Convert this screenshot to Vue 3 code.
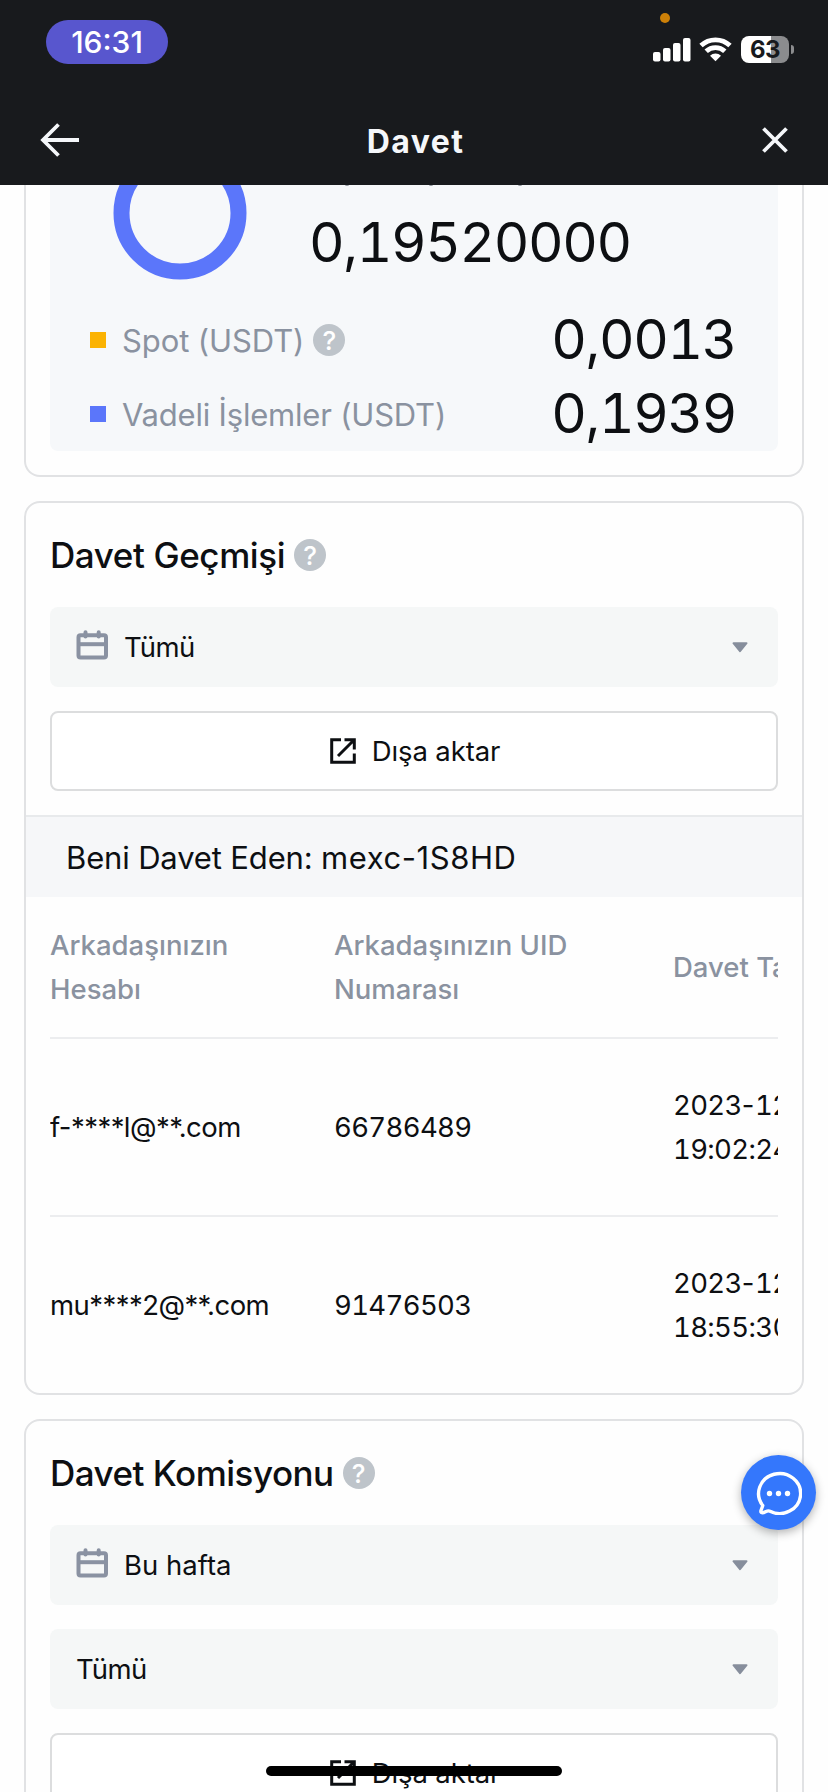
<template>
  <div class="screen">
    <header class="top">
      <div class="status-bar">
        <span class="clock">16:31</span>
        <span class="mic-dot"></span>
        <div class="status-icons">
          <svg class="signal" width="38" height="24" viewBox="0 0 38 24">
            <rect x="0" y="14" width="7.5" height="9.5" rx="2" />
            <rect x="10" y="10" width="7.5" height="13.5" rx="2" />
            <rect x="20" y="5" width="7.5" height="18.5" rx="2" />
            <rect x="30" y="0" width="7.5" height="23.5" rx="2" />
          </svg>
          <svg class="wifi" width="33" height="25" viewBox="0 0 33 25">
            <path d="M2 8.6A21 21 0 0 1 31 8.6" />
            <path d="M7.2 14.3A13.4 13.4 0 0 1 25.8 14.3" />
            <path class="wifi-base" d="M16.500 24.200L11 18.700A8.200 8.200 0 0 1 22 18.700Z" />
          </svg>
          <div class="battery">
            <span class="battery-body">63</span>
            <span class="battery-tip"></span>
          </div>
        </div>
      </div>
      <nav class="nav-bar">
        <svg class="back" width="40" height="34" viewBox="0 0 40 34">
          <path d="M39 17H3M18.500 1.500L3 17L18.500 32.500" />
        </svg>
        <h1 class="nav-title">Davet</h1>
        <svg class="close" width="26" height="26" viewBox="0 0 26 26">
          <path d="M1.500 1.500L24.500 24.500M24.500 1.500L1.500 24.500" />
        </svg>
      </nav>
    </header>

    <main class="content">
      <!-- Earnings summary -->
      <section class="card card-cut">
        <div class="panel">
          <div class="total">
            <svg class="donut" width="134" height="96" viewBox="0 0 134 96">
              <circle cx="67" cy="28" r="58.500" />
            </svg>
            <div class="total-text">
              <svg class="tails" width="190" height="3" viewBox="0 0 190 3">
                <ellipse v-for="x in [3, 87, 176]" :key="x" :cx="x" cy="0" rx="2" ry="0.900" />
              </svg>
              <span class="total-value">0,19520000</span>
            </div>
          </div>
          <div v-for="item in earnings" :key="item.label" class="earning">
            <span class="swatch" :class="item.type"></span>
            <span class="earning-label" :class="item.type">{{ item.label }}</span>
            <span v-if="item.help" class="help">?</span>
            <span class="earning-value">{{ item.value }}</span>
          </div>
        </div>
      </section>

      <!-- Invite history -->
      <section class="card">
        <h2 class="card-title">Davet Geçmişi<span class="help">?</span></h2>
        <div class="controls">
          <div class="select">
            <svg class="calendar" width="32" height="30" viewBox="0 0 32 30">
              <rect x="2.500" y="5.300" width="27.500" height="22.200" rx="2" />
              <path d="M2 14.200H30" />
              <path class="pins" d="M9.500 2.300V6.500M22.700 2.300V6.500" />
            </svg>
            <span class="select-text all">Tümü</span>
            <svg class="caret" width="16" height="11" viewBox="0 0 16 11">
              <path d="M1.500 1.200H14.500L8 9.200Z" />
            </svg>
          </div>
          <button class="export">
            <svg width="26" height="26" viewBox="0 0 26 26">
              <path d="M11 1.700H1.700V24.300H24.300V15.500M14.500 1.700H24.300V11.500M24 2L8 18" />
            </svg>
            <span>Dışa aktar</span>
          </button>
        </div>
        <div class="inviter">Beni Davet Eden: <span class="code">mexc-1S8HD</span></div>
        <div class="table">
          <div class="row head">
            <div class="cell"><span>Arkadaşınızın</span><span>Hesabı</span></div>
            <div class="cell"><span>Arkadaşınızın UID</span><span>Numarası</span></div>
            <div class="cell"><span>Davet Tarihi</span></div>
          </div>
          <div v-for="row in invites" :key="row.uid" class="row">
            <div class="cell account">{{ row.account }}</div>
            <div class="cell numeric">{{ row.uid }}</div>
            <div class="cell numeric">
              <span>{{ row.year }}<i class="dash">-</i>{{ row.month }}</span>
              <span>{{ row.time }}</span>
            </div>
          </div>
        </div>
      </section>

      <!-- Invite commission -->
      <section class="card">
        <h2 class="card-title commission">Davet Komisyonu<span class="help">?</span></h2>
        <div class="controls">
          <div class="select">
            <svg class="calendar" width="32" height="30" viewBox="0 0 32 30">
              <rect x="2.500" y="5.300" width="27.500" height="22.200" rx="2" />
              <path d="M2 14.200H30" />
              <path class="pins" d="M9.500 2.300V6.500M22.700 2.300V6.500" />
            </svg>
            <span class="select-text">Bu hafta</span>
            <svg class="caret" width="16" height="11" viewBox="0 0 16 11">
              <path d="M1.500 1.200H14.500L8 9.200Z" />
            </svg>
          </div>
          <div class="select">
            <span class="select-text all">Tümü</span>
            <svg class="caret" width="16" height="11" viewBox="0 0 16 11">
              <path d="M1.500 1.200H14.500L8 9.200Z" />
            </svg>
          </div>
          <button class="export">
            <svg width="26" height="26" viewBox="0 0 26 26">
              <path d="M11 1.700H1.700V24.300H24.300V15.500M14.500 1.700H24.300V11.500M24 2L8 18" />
            </svg>
            <span>Dışa aktar</span>
          </button>
        </div>
      </section>
    </main>

    <button class="chat">
      <svg width="46" height="44" viewBox="0 0 46 44">
        <path d="M6.800 34.500A21 20 0 1 1 14 40.300C12.500 39.200 11.500 39.700 9.500 40.800C6.500 42.500 4.300 42 5 39.500Z" />
        <circle cx="13.500" cy="22.500" r="2.700" />
        <circle cx="22.500" cy="22.500" r="2.700" />
        <circle cx="31.500" cy="22.500" r="2.700" />
      </svg>
    </button>
    <div class="home-indicator"></div>
  </div>
</template>

<script setup>
const earnings = [
  { type: 'spot', label: 'Spot (USDT)', value: '0,0013', help: true },
  { type: 'futures', label: 'Vadeli İşlemler (USDT)', value: '0,1939', help: false }
]

const invites = [
  { account: 'f-****l@**.com', uid: '66786489', year: '2023', month: '12', time: '19:02:24' },
  { account: 'mu****2@**.com', uid: '91476503', year: '2023', month: '12', time: '18:55:30' }
]
</script>

<style>
body {
  margin: 0;
  background: #fff;
}
</style>

<style scoped>
.screen {
  position: relative;
  width: 828px;
  height: 1792px;
  overflow: hidden;
  background: #fefefe;
  color: #0d0f12;
  font-family: Inter, "Liberation Sans", sans-serif;
}

.screen * {
  box-sizing: border-box;
}

.screen svg {
  display: block;
  flex: none;
}

button {
  padding: 0;
  border: none;
  color: inherit;
  font-family: inherit;
}

/* Header */
.top {
  height: 185px;
  background: #181a1d;
}

.status-bar {
  position: relative;
  display: flex;
  justify-content: space-between;
  align-items: flex-start;
  height: 96px;
  padding: 20px 34px 0 46px;
}

.clock {
  width: 122px;
  height: 44px;
  border-radius: 22px;
  background: #5856ce;
  color: #fff;
  font-size: 30px;
  font-weight: 500;
  line-height: 45px;
  text-align: center;
}

.mic-dot {
  position: absolute;
  top: 13px;
  left: 660px;
  width: 10px;
  height: 10px;
  border-radius: 50%;
  background: #cc8008;
}

.status-icons {
  display: flex;
  align-items: center;
  margin-top: 16px;
}

.signal {
  margin-right: 8px;
  fill: #fff;
}

.wifi {
  margin-right: 9px;
  fill: none;
  stroke: #fff;
  stroke-width: 4.8;
}

.wifi .wifi-base {
  fill: #fff;
  stroke: none;
}

.battery {
  display: flex;
  align-items: center;
  gap: 2px;
}

.battery-body {
  width: 48px;
  height: 27px;
  border-radius: 8px;
  background: linear-gradient(90deg, #fff 63%, #8b8c8e 63%);
  color: #181a1d;
  font-size: 24px;
  font-weight: 700;
  line-height: 27px;
  letter-spacing: -0.5px;
  text-align: center;
}

.battery-tip {
  width: 3px;
  height: 9px;
  border-radius: 0 4px 4px 0;
  background: #8b8c8e;
}

.nav-bar {
  display: flex;
  justify-content: space-between;
  align-items: center;
  height: 89px;
  padding: 0 40px;
}

.nav-bar svg {
  margin-top: -1px;
  fill: none;
  stroke: #f5f7fa;
  stroke-width: 3.8;
}

.nav-title {
  margin: 2px 11px 0 0;
  color: #f5f7fa;
  font-size: 32px;
  font-weight: 700;
  line-height: 44px;
  letter-spacing: 1.4px;
}

/* Cards */
.content {
  display: flex;
  flex-direction: column;
  gap: 24px;
  padding: 0 24px;
}

.card {
  border: 2px solid #e1e2e4;
  border-radius: 16px;
}

.card-cut {
  height: 292px;
  padding: 0 24px 24px;
  border-top: none;
  border-radius: 0 0 16px 16px;
}

.panel {
  height: 266px;
  border-radius: 0 0 8px 8px;
  background: #f6f8fa;
}

.total {
  display: flex;
  height: 118px;
  padding-left: 63px;
}

.donut circle {
  fill: none;
  stroke: #5b76fa;
  stroke-width: 16;
}

.total-text {
  display: flex;
  flex-direction: column;
  margin-left: 62px;
}

.tails {
  margin-left: 35px;
  fill: #8d9299;
}

.total-value,
.earning-value {
  font-size: 55px;
  font-variant-numeric: tabular-nums;
  letter-spacing: -1.4px;
}

.total-value {
  margin-top: 19px;
  line-height: 70px;
}

.earning {
  display: flex;
  align-items: center;
  height: 74px;
  padding: 0 42px 0 40px;
}

.swatch {
  width: 16px;
  height: 16px;
  margin-right: 16px;
}

.swatch.spot {
  background: #fbb303;
}

.swatch.futures {
  background: #5b76fa;
}

.earning-label {
  color: #8a92a0;
  font-size: 31px;
}

.earning-label.spot {
  letter-spacing: -0.1px;
}

.earning-label.futures {
  letter-spacing: -0.2px;
}

.earning-value {
  margin: -2px 0 0 auto;
}

.help {
  display: inline-block;
  width: 32px;
  height: 32px;
  margin-left: 9px;
  border-radius: 50%;
  background: #bec4ca;
  color: #fff;
  font-size: 26px;
  font-weight: 500;
  line-height: 33px;
  letter-spacing: 0;
  text-align: center;
}

.card-title {
  display: flex;
  align-items: center;
  height: 104px;
  margin: 0;
  padding-left: 24px;
  font-size: 35px;
  font-weight: 500;
  letter-spacing: -0.4px;
}

.card-title.commission {
  letter-spacing: -0.5px;
}

.controls {
  display: flex;
  flex-direction: column;
  gap: 24px;
  padding: 0 24px 24px;
}

.select {
  display: flex;
  align-items: center;
  height: 80px;
  padding: 0 30px 0 26px;
  border-radius: 8px;
  background: #f5f7f7;
}

.calendar {
  margin: -5px 16px 0 0;
  fill: none;
  stroke: #8a92a2;
  stroke-width: 4;
}

.calendar .pins {
  stroke-linecap: round;
}

.select-text {
  font-size: 27.5px;
}

.select-text.all {
  letter-spacing: -0.6px;
}

.caret {
  margin-left: auto;
  fill: #868e9c;
  stroke: #868e9c;
  stroke-width: 2;
  stroke-linejoin: round;
}

.export {
  display: flex;
  justify-content: center;
  align-items: center;
  gap: 16px;
  height: 80px;
  padding-left: 2px;
  border: 2px solid #dcddde;
  border-radius: 8px;
  background: #fff;
  font-size: 27.5px;
  letter-spacing: -0.1px;
}

.export svg {
  fill: none;
  stroke: #0d0f12;
  stroke-width: 3;
}

/* Table */
.inviter {
  height: 82px;
  padding-left: 40px;
  border-top: 2px solid #e8eaec;
  background: #f6f7f9;
  font-size: 31px;
  line-height: 82px;
  letter-spacing: -0.15px;
}

.code {
  letter-spacing: 0.55px;
}

.table {
  margin: 0 24px;
  overflow: hidden;
}

.row {
  display: grid;
  grid-template-columns: 284px 339px 240px;
  align-items: center;
  height: 178px;
  border-bottom: 2px solid #ecedef;
  font-size: 27.5px;
  line-height: 44px;
  white-space: nowrap;
}

.row:last-child {
  height: 176px;
  border-bottom: none;
}

.row.head {
  height: 142px;
  color: #8a92a0;
  font-weight: 500;
}

.cell span {
  display: block;
}

.cell.account {
  letter-spacing: -0.55px;
}

.cell.numeric {
  font-variant-numeric: tabular-nums;
  letter-spacing: -0.65px;
}

.dash {
  font-style: normal;
  font-variant-numeric: normal;
  letter-spacing: 0.5px;
}

/* Floating parts */
.chat {
  position: absolute;
  top: 1455px;
  left: 741px;
  display: flex;
  justify-content: center;
  align-items: center;
  width: 75px;
  height: 75px;
  border-radius: 50%;
  background: #3477fc;
  box-shadow: 0 3px 10px rgba(0, 0, 0, 0.3);
}

.chat svg {
  fill: #fff;
}

.chat path {
  fill: none;
  stroke: #fff;
  stroke-width: 3.4;
  stroke-linejoin: round;
}

.home-indicator {
  position: absolute;
  bottom: 16px;
  left: 266px;
  width: 296px;
  height: 10px;
  border-radius: 5px;
  background: #000;
}
</style>
